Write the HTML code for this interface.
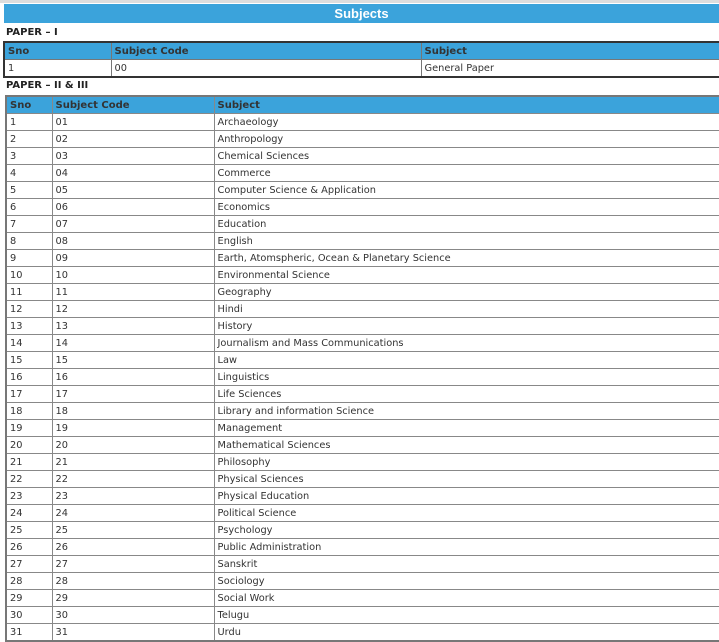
<!DOCTYPE html>
<html><head><style>
*{margin:0;padding:0;box-sizing:border-box}
body{width:719px;height:641px;overflow:hidden;background:#fff;font-family:"DejaVu Sans",Verdana,sans-serif;font-size:9.8px;color:#333;position:relative}
.top{position:absolute;left:0;top:0;width:719px;height:3px;background:#ddd}
.bar{position:absolute;left:4px;top:4px;width:715px;height:19px;background:#3ba3db;color:#fff;font-family:"Liberation Sans",sans-serif;font-weight:bold;font-size:13px;text-align:center;line-height:19px}
.h{position:absolute;font-weight:bold;font-size:10px;color:#222}
table{position:absolute;border-collapse:collapse;table-layout:fixed}
td{height:17px;padding:1px 0 0 3px;line-height:15px;white-space:nowrap;overflow:hidden}
.t1{left:3px;top:41px;width:720px;border:2px solid #333}
.t1 td{border:1px solid #777}
.t2{left:5px;top:95px;width:716px;border:2px solid #777}
.t2 td{border:1px solid #888}
tr.hd td{background:#3ba3db;font-weight:bold;color:#333;font-size:10px}
</style></head><body>
<div class="top"></div>
<div class="bar">Subjects</div>
<div class="h" style="left:6px;top:27px">PAPER – I</div>
<table class="t1"><colgroup><col style="width:107px"><col style="width:310px"><col></colgroup>
<tr class="hd"><td>Sno</td><td>Subject Code</td><td>Subject</td></tr>
<tr><td>1</td><td>00</td><td>General Paper</td></tr></table>
<div class="h" style="left:6px;top:80px">PAPER – II &amp; III</div>
<table class="t2"><colgroup><col style="width:46px"><col style="width:162px"><col></colgroup>
<tr class="hd"><td>Sno</td><td>Subject Code</td><td>Subject</td></tr>
<tr><td>1</td><td>01</td><td>Archaeology</td></tr>
<tr><td>2</td><td>02</td><td>Anthropology</td></tr>
<tr><td>3</td><td>03</td><td>Chemical Sciences</td></tr>
<tr><td>4</td><td>04</td><td>Commerce</td></tr>
<tr><td>5</td><td>05</td><td>Computer Science &amp; Application</td></tr>
<tr><td>6</td><td>06</td><td>Economics</td></tr>
<tr><td>7</td><td>07</td><td>Education</td></tr>
<tr><td>8</td><td>08</td><td>English</td></tr>
<tr><td>9</td><td>09</td><td>Earth, Atomspheric, Ocean &amp; Planetary Science</td></tr>
<tr><td>10</td><td>10</td><td>Environmental Science</td></tr>
<tr><td>11</td><td>11</td><td>Geography</td></tr>
<tr><td>12</td><td>12</td><td>Hindi</td></tr>
<tr><td>13</td><td>13</td><td>History</td></tr>
<tr><td>14</td><td>14</td><td>Journalism and Mass Communications</td></tr>
<tr><td>15</td><td>15</td><td>Law</td></tr>
<tr><td>16</td><td>16</td><td>Linguistics</td></tr>
<tr><td>17</td><td>17</td><td>Life Sciences</td></tr>
<tr><td>18</td><td>18</td><td>Library and information Science</td></tr>
<tr><td>19</td><td>19</td><td>Management</td></tr>
<tr><td>20</td><td>20</td><td>Mathematical Sciences</td></tr>
<tr><td>21</td><td>21</td><td>Philosophy</td></tr>
<tr><td>22</td><td>22</td><td>Physical Sciences</td></tr>
<tr><td>23</td><td>23</td><td>Physical Education</td></tr>
<tr><td>24</td><td>24</td><td>Political Science</td></tr>
<tr><td>25</td><td>25</td><td>Psychology</td></tr>
<tr><td>26</td><td>26</td><td>Public Administration</td></tr>
<tr><td>27</td><td>27</td><td>Sanskrit</td></tr>
<tr><td>28</td><td>28</td><td>Sociology</td></tr>
<tr><td>29</td><td>29</td><td>Social Work</td></tr>
<tr><td>30</td><td>30</td><td>Telugu</td></tr>
<tr><td>31</td><td>31</td><td>Urdu</td></tr>
</table>
</body></html>
